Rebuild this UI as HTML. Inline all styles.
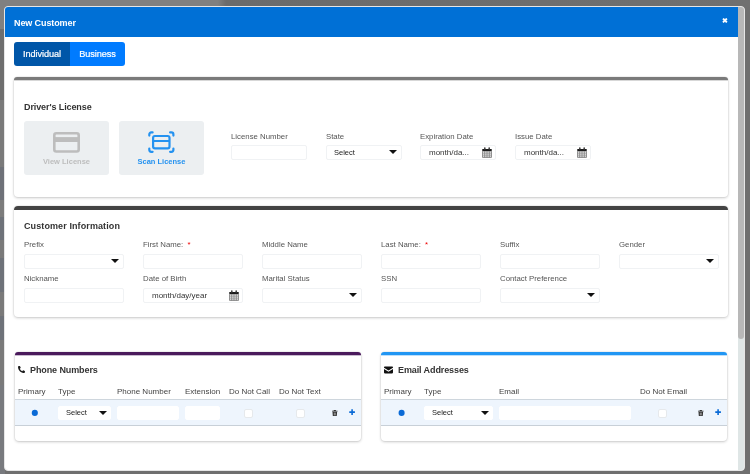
<!DOCTYPE html>
<html lang="en">
<head>
<meta charset="utf-8">
<title>New Customer</title>
<style>
*{box-sizing:border-box;margin:0;padding:0}
html,body{width:750px;height:474px;overflow:hidden}
body{background:#6f6f6f;font-family:"Liberation Sans",Arial,sans-serif;position:relative;color:#333}
.bgtop{position:absolute;left:0;top:0;width:750px;height:7px;background:linear-gradient(90deg,#808080 0,#808080 218px,#6b6b6b 226px,#707070 100%)}
.bgleft{position:absolute;left:0;top:0;width:5px;height:474px;background:linear-gradient(180deg,#808080 0,#808080 29px,#6e6e6e 29px,#6e6e6e 100px,#7a7a7a 100px,#7a7a7a 167px,#6e7178 167px,#6e7178 200px,#7c7c7c 200px,#7c7c7c 217px,#6e7279 217px,#6e7279 240px,#7a7a7a 240px,#7a7a7a 258px,#6e7279 258px,#6e7279 292px,#7a7a7a 292px,#7a7a7a 316px,#6e7279 316px,#6e7279 340px,#7a7a7a 340px,#7a7a7a 385px,#787a7e 385px,#787a7e 474px)}
.modal{position:absolute;left:4px;top:6px;width:741px;height:465px;background:#fff;border:1px solid #e6e6e6;border-radius:4px;overflow:hidden;will-change:transform}
.hdr{position:absolute;left:0;top:0;width:733px;height:30px;background:#0070d6;color:#fff;font-weight:bold;font-size:9px;line-height:32px;padding-left:9px;letter-spacing:-0.1px}
.close{position:absolute;left:717.300px;top:0;font-size:7px;font-weight:bold;color:#fff;line-height:27.500px}
.sbar{position:absolute;left:733px;top:0;width:6.200px;height:463px;background:#dfe6e6}
.thumb{position:absolute;left:0;top:0;width:6.200px;height:332px;background:#b8b8b8;border-radius:0 0 3px 3px}
.abs{position:absolute}
.tabs{position:absolute;left:9px;top:35px;height:24px;border-radius:3px;overflow:hidden;display:flex;font-size:9.2px;color:#fff;line-height:24px;letter-spacing:-0.1px;-webkit-text-stroke:.2px #fff}
.tabs div{text-align:center}
.t1{background:#0056a8;width:56px}
.t2{background:#007bff;width:55px}
.card{position:absolute;background:#fff;border-radius:4px;box-shadow:0 1px 3px rgba(0,0,0,.2),0 0 0 1px rgba(0,0,0,.035)}
.card .top{position:absolute;left:0;top:0;right:0;height:4px;border-radius:4px 4px 0 0}
h3{position:absolute;letter-spacing:-0.1px;font-size:9px;font-weight:bold;color:#333;white-space:nowrap;line-height:12px}
.lbl{position:absolute;font-size:7.8px;color:#555;white-space:nowrap;line-height:10px}
.inp{position:absolute;height:15px;border:1px solid #f0f2f4;border-radius:2px;background:#fff;font-size:8px;color:#333;line-height:13px;white-space:nowrap}
.arrow{position:absolute;right:4px;top:4px;width:0;height:0;border-left:4.5px solid transparent;border-right:4.5px solid transparent;border-top:4.5px solid #111}
.req{color:#e00;margin-left:2px}
.btn{position:absolute;width:85px;height:54px;background:#eceff1;border-radius:3px;text-align:center;font-size:7.5px;font-weight:bold}
.row{position:absolute;left:0;right:0;top:47px;height:27px;background:#eef5fd;border-top:1px solid #ced6dd;border-bottom:1px solid #c8d0d8}
.row>*{margin-top:1px}
.row .arrow{right:3px;margin-top:-.5px}
.dot{position:absolute;width:8px;height:8px}
.chk{position:absolute;width:9px;height:9px;border:1px solid #e6e9ec;border-radius:2px;background:#fff}
.th{position:absolute;font-size:8px;color:#444;white-space:nowrap;line-height:10px;top:35px}
.cal{position:absolute;right:3px;top:1px}
.ico{position:absolute}
</style>
</head>
<body>
<div class="bgleft"></div>
<div class="bgtop"></div>
<div class="modal">
  <div class="hdr">New Customer</div>
  <div class="close">&#10006;</div>
  <div class="sbar"><div class="thumb"></div></div>

  <div class="tabs"><div class="t1">Individual</div><div class="t2">Business</div></div>

  <!-- Driver's License -->
  <div class="card" style="left:9px;top:70px;width:714px;height:120px">
    <div class="top" style="background:#7a7a7a;height:3px;box-shadow:0 1px 0 rgba(122,122,122,.3)"></div>
    <h3 style="left:10px;top:24px">Driver's License</h3>
    <div class="btn" style="left:10px;top:44px;color:#bdbdbd">
      <svg class="abs" style="left:29px;top:11px" width="27" height="21" viewBox="0 0 27 21"><rect x="1.300" y="1.300" width="24.400" height="18.200" rx="2" fill="none" stroke="#bdbdbd" stroke-width="2.600"/><rect x="1.300" y="5.100" width="24.400" height="4.900" fill="#bdbdbd"/></svg>
      <span class="abs" style="left:0;right:0;top:36px;line-height:10px">View License</span>
    </div>
    <div class="btn" style="left:105px;top:44px;color:#2492f0">
      <svg class="abs" style="left:29px;top:10px" width="27" height="22" viewBox="0 0 27 22"><g fill="none" stroke="#2492f0" stroke-width="2.2" stroke-linecap="round"><path d="M1.300 4.600V3.400a2 2 0 0 1 2-2H4.600"/><path d="M22.100 1.400h1.300a2 2 0 0 1 2 2V4.600"/><path d="M25.400 17.600v1.200a2 2 0 0 1-2 2H22.100"/><path d="M4.600 20.800H3.300a2 2 0 0 1-2-2V17.600"/><rect x="5.100" y="5" width="16.400" height="12.300" rx="1.800"/><path d="M5.100 10h16.400" stroke-linecap="butt" stroke-width="2"/></g></svg>
      <span class="abs" style="left:0;right:0;top:36px;line-height:10px">Scan License</span>
    </div>
    <div class="lbl" style="left:217px;top:55px">License Number</div>
    <div class="inp" style="left:217px;top:68px;width:76px"></div>
    <div class="lbl" style="left:312px;top:55px">State</div>
    <div class="inp" style="left:312px;top:68px;width:76px;padding-left:7px;font-size:7.500px;color:#222">Select<span class="arrow"></span></div>
    <div class="lbl" style="left:406px;top:55px">Expiration Date</div>
    <div class="inp" style="left:406px;top:68px;width:76px;padding-left:8px">month/da...<svg class="cal" width="10" height="11" viewBox="0 0 10 11"><rect x="0.3" y="2" width="9.4" height="8.7" rx="0.8" fill="#dcdcdc"/><rect x="0.3" y="2" width="9.4" height="2.2" fill="#1a1a1a"/><rect x="2" y="0.2" width="1.6" height="2.6" rx="0.7" fill="#444"/><rect x="6.4" y="0.2" width="1.6" height="2.6" rx="0.7" fill="#444"/><g stroke="#6a6a6a" stroke-width="0.7" fill="none"><path d="M0.5 4.300V10.400H9.500V4.300"/><path d="M2.700 4.300V10.400M5 4.300V10.400M7.300 4.300V10.400"/></g><g stroke="#8c8c8c" stroke-width="0.5"><path d="M0.500 6.300H9.500M0.500 8.300H9.500"/></g></svg></div>
    <div class="lbl" style="left:501px;top:55px">Issue Date</div>
    <div class="inp" style="left:501px;top:68px;width:76px;padding-left:8px">month/da...<svg class="cal" width="10" height="11" viewBox="0 0 10 11"><rect x="0.3" y="2" width="9.4" height="8.7" rx="0.8" fill="#dcdcdc"/><rect x="0.3" y="2" width="9.4" height="2.2" fill="#1a1a1a"/><rect x="2" y="0.2" width="1.6" height="2.6" rx="0.7" fill="#444"/><rect x="6.4" y="0.2" width="1.6" height="2.6" rx="0.7" fill="#444"/><g stroke="#6a6a6a" stroke-width="0.7" fill="none"><path d="M0.5 4.300V10.400H9.500V4.300"/><path d="M2.700 4.300V10.400M5 4.300V10.400M7.300 4.300V10.400"/></g><g stroke="#8c8c8c" stroke-width="0.5"><path d="M0.500 6.300H9.500M0.500 8.300H9.500"/></g></svg></div>
  </div>

  <!-- Customer Information -->
  <div class="card" style="left:9px;top:199px;width:714px;height:111px">
    <div class="top" style="background:#444"></div>
    <h3 style="left:10px;top:14px;letter-spacing:0.1px">Customer Information</h3>
    <div class="lbl" style="left:10px;top:34px">Prefix</div>
    <div class="inp" style="left:10px;top:48px;width:100px"><span class="arrow"></span></div>
    <div class="lbl" style="left:129px;top:34px">First Name: <span class="req">*</span></div>
    <div class="inp" style="left:129px;top:48px;width:100px"></div>
    <div class="lbl" style="left:248px;top:34px">Middle Name</div>
    <div class="inp" style="left:248px;top:48px;width:100px"></div>
    <div class="lbl" style="left:367px;top:34px">Last Name: <span class="req">*</span></div>
    <div class="inp" style="left:367px;top:48px;width:100px"></div>
    <div class="lbl" style="left:486px;top:34px">Suffix</div>
    <div class="inp" style="left:486px;top:48px;width:100px"></div>
    <div class="lbl" style="left:605px;top:34px">Gender</div>
    <div class="inp" style="left:605px;top:48px;width:100px"><span class="arrow"></span></div>

    <div class="lbl" style="left:10px;top:68px">Nickname</div>
    <div class="inp" style="left:10px;top:82px;width:100px"></div>
    <div class="lbl" style="left:129px;top:68px">Date of Birth</div>
    <div class="inp" style="left:129px;top:82px;width:100px;padding-left:8px">month/day/year<svg class="cal" width="10" height="11" viewBox="0 0 10 11"><rect x="0.3" y="2" width="9.4" height="8.7" rx="0.8" fill="#dcdcdc"/><rect x="0.3" y="2" width="9.4" height="2.2" fill="#1a1a1a"/><rect x="2" y="0.2" width="1.6" height="2.6" rx="0.7" fill="#444"/><rect x="6.4" y="0.2" width="1.6" height="2.6" rx="0.7" fill="#444"/><g stroke="#6a6a6a" stroke-width="0.7" fill="none"><path d="M0.5 4.300V10.400H9.500V4.300"/><path d="M2.700 4.300V10.400M5 4.300V10.400M7.300 4.300V10.400"/></g><g stroke="#8c8c8c" stroke-width="0.5"><path d="M0.500 6.300H9.500M0.500 8.300H9.500"/></g></svg></div>
    <div class="lbl" style="left:248px;top:68px">Marital Status</div>
    <div class="inp" style="left:248px;top:82px;width:100px"><span class="arrow"></span></div>
    <div class="lbl" style="left:367px;top:68px">SSN</div>
    <div class="inp" style="left:367px;top:82px;width:100px"></div>
    <div class="lbl" style="left:486px;top:68px">Contact Preference</div>
    <div class="inp" style="left:486px;top:82px;width:100px"><span class="arrow"></span></div>
  </div>

  <!-- Phone Numbers -->
  <div class="card" style="left:10px;top:345px;width:346px;height:89px">
    <div class="top" style="background:#4a1a5c;height:3px;box-shadow:0 1px 0 rgba(74,26,92,.3)"></div>
    <svg class="ico" style="left:3px;top:14px" width="7" height="7" viewBox="0 0 512 512"><path fill="#1a1a1a" d="M493.400 24.600l-104-24c-11.300-2.600-22.900 3.300-27.500 13.900l-48 112c-4.200 9.800-1.400 21.300 6.900 28l60.600 49.600c-36 76.700-98.900 140.500-177.200 177.200l-49.600-60.600c-6.800-8.300-18.200-11.100-28-6.900l-112 48C3.900 366.500-2 378.100.6 389.400l24 104C27.100 504.200 36.700 512 48 512c256.100 0 464-207.500 464-464 0-11.200-7.700-20.900-18.600-23.400z" transform="scale(-1,1) translate(-512,0)"/></svg>
    <h3 style="left:15px;top:12px">Phone Numbers</h3>
    <div class="th" style="left:3px">Primary</div>
    <div class="th" style="left:43px">Type</div>
    <div class="th" style="left:102px">Phone Number</div>
    <div class="th" style="left:170px">Extension</div>
    <div class="th" style="left:214px">Do Not Call</div>
    <div class="th" style="left:264px">Do Not Text</div>
    <div class="row">
      <svg class="dot" style="left:16px;top:8px" viewBox="0 0 8 8"><circle cx="3.800" cy="3.900" r="3.050" fill="#0a6ad6"/></svg>
      <div class="inp" style="left:43px;top:5px;height:14px;line-height:12px;width:53px;padding-left:7px;font-size:7.500px;color:#222;border-color:#fff">Select<span class="arrow"></span></div>
      <div class="inp" style="left:102px;top:5px;height:14px;line-height:12px;width:62px;border-color:#fff"></div>
      <div class="inp" style="left:170px;top:5px;height:14px;line-height:12px;width:35px;border-color:#fff"></div>
      <div class="chk" style="left:229px;top:8px"></div>
      <div class="chk" style="left:281px;top:8px"></div>
      <svg class="ico" style="left:317.300px;top:8.600px" width="5.600" height="6.400" viewBox="0 0 7 8"><path d="M2.300 0h2.400l.4.800H7v1H0v-1h1.900z" fill="#333"/><path d="M.6 2.300h5.800l-.4 5a.8.800 0 0 1-.8.700H1.800a.8.800 0 0 1-.8-.7z" fill="#333"/><rect x="2.200" y="3.300" width="2.600" height="3.400" fill="#8a8a8a"/></svg>
      <svg class="ico" style="left:334.200px;top:8.300px" width="6.200" height="6.200" viewBox="0 0 7 7"><path d="M3.500 0.300V6.700M0.300 3.500H6.700" stroke="#0a6ad6" stroke-width="1.800" fill="none"/></svg>
    </div>
  </div>

  <!-- Email Addresses -->
  <div class="card" style="left:376px;top:345px;width:346px;height:89px">
    <div class="top" style="background:#2196f3;height:3px;box-shadow:0 1px 0 rgba(33,150,243,.3)"></div>
    <svg class="ico" style="left:3px;top:14px" width="9" height="8" viewBox="0 -0.400 9 8"><path fill="#111" d="M.8 0h7.400a.8.800 0 0 1 .8.800v.5L4.500 4 0 1.300V.8A.8.800 0 0 1 .8 0z"/><path fill="#111" d="M0 2.700l4.500 2.700L9 2.700v3.500a.8.800 0 0 1-.8.800H.8A.8.800 0 0 1 0 6.200z"/></svg>
    <h3 style="left:17px;top:12px">Email Addresses</h3>
    <div class="th" style="left:3px">Primary</div>
    <div class="th" style="left:43px">Type</div>
    <div class="th" style="left:118px">Email</div>
    <div class="th" style="left:259px">Do Not Email</div>
    <div class="row">
      <svg class="dot" style="left:17px;top:8px" viewBox="0 0 8 8"><circle cx="3.600" cy="3.900" r="3.050" fill="#0a6ad6"/></svg>
      <div class="inp" style="left:43px;top:5px;height:14px;line-height:12px;width:69px;padding-left:7px;font-size:7.500px;color:#222;border-color:#fff">Select<span class="arrow"></span></div>
      <div class="inp" style="left:118px;top:5px;height:14px;line-height:12px;width:132px;border-color:#fff"></div>
      <div class="chk" style="left:277px;top:8px"></div>
      <svg class="ico" style="left:317.300px;top:8.600px" width="5.600" height="6.400" viewBox="0 0 7 8"><path d="M2.300 0h2.400l.4.800H7v1H0v-1h1.900z" fill="#333"/><path d="M.6 2.300h5.800l-.4 5a.8.800 0 0 1-.8.700H1.800a.8.800 0 0 1-.8-.7z" fill="#333"/><rect x="2.200" y="3.300" width="2.600" height="3.400" fill="#8a8a8a"/></svg>
      <svg class="ico" style="left:334.200px;top:8.300px" width="6.200" height="6.200" viewBox="0 0 7 7"><path d="M3.500 0.300V6.700M0.300 3.500H6.700" stroke="#0a6ad6" stroke-width="1.800" fill="none"/></svg>
    </div>
  </div>
</div>
</body>
</html>
